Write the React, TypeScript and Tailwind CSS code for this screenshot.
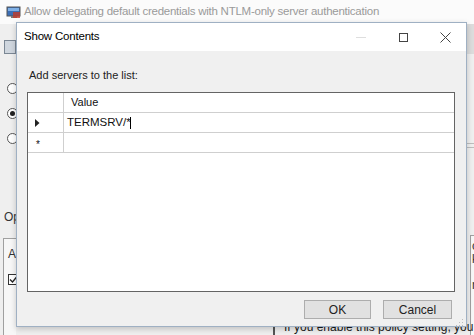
import React from "react";

const font = { fontFamily: '"Liberation Sans", Arial, sans-serif' };

function ParentIcon() {
  return (
    <svg width="16" height="13" viewBox="0 0 16 13">
      <rect x="1" y="1" width="13" height="9" fill="#3b6fb6" stroke="#555" strokeWidth="1" />
      <rect x="2" y="2" width="11" height="3" fill="#7fb0e6" />
      <rect x="5" y="10" width="6" height="2" fill="#777" />
      <rect x="7" y="6" width="7" height="6" fill="#c0392b" opacity="0.8" />
    </svg>
  );
}

export default function App() {
  return (
    <div className="relative w-[474px] h-[335px] overflow-hidden bg-[#efefef] text-[#222]" style={font}>
      {/* Parent window title */}
      <div className="h-[24px] bg-[#fbfbfb] flex items-center pl-[6px] gap-[2px]">
        <ParentIcon />
        <span className="text-[11.5px] text-[#9a9a9a] tracking-[-0.25px] whitespace-nowrap">
          Allow delegating default credentials with NTLM-only server authentication
        </span>
      </div>
      {/* Parent left column */}
      <div className="flex">
        <div className="w-[16px] flex flex-col">
          <div className="h-[14px] mt-[16px] ml-[4px] w-[12px] bg-[#cfd6de] border border-[#7b8794]" />
          <div className="mt-[29px] ml-[7px] w-[11px] h-[11px] rounded-full border border-[#555] bg-white" />
          <div className="mt-[14px] ml-[7px] w-[11px] h-[11px] rounded-full border border-[#555] bg-white flex items-center justify-center">
            <div className="w-[5px] h-[5px] rounded-full bg-[#222]" />
          </div>
          <div className="mt-[14px] ml-[7px] w-[11px] h-[11px] rounded-full border border-[#555] bg-white" />
          <div className="mt-[67px] ml-[4px] h-[12px] text-[12px] text-[#333] leading-none">Op</div>
          <div className="mt-[15px] ml-[3px] h-[120px] border-l border-t border-[#a0a0a0] bg-[#f7f7f7] pl-[4px]">
            <div className="mt-[9px] h-[12px] text-[12px] leading-none text-[#333]">A</div>
            <div className="mt-[14px] w-[11px] h-[11px] border border-[#333] bg-white flex items-center justify-center">
              <svg width="9" height="9" viewBox="0 0 9 9">
                <path d="M1 4.5 L3.5 7 L8 1.5" fill="none" stroke="#222" strokeWidth="1.3" />
              </svg>
            </div>
          </div>
        </div>
      </div>
      {/* Parent right strip */}
      <div className="absolute left-[467px] top-[24px] w-[7px] h-[311px] flex flex-col overflow-hidden">
        <div className="h-[30px] bg-[#dcdcdc]" />
        <div className="mt-[89px] h-[5px] border-t border-b border-[#bdbdbd]" />
        <div className="mt-[87px] ml-[3px] flex-1 border-l border-t border-[#a0a0a0] bg-[#f7f7f7] pl-[1px] text-[12px] leading-[13px] text-[#333]">
          <div className="mt-[4px]">o</div>
          <div>k</div>
          <div className="mt-[13px]">r</div>
        </div>
      </div>
      {/* Parent bottom text (partly under the dialog) */}
      <div className="absolute left-[273px] top-[320px] h-[15px] flex items-start">
        <div className="w-[2px] h-[15px] bg-[#555]" />
        <span className="ml-[9px] text-[12px] leading-[15px] text-[#1a1a1a] whitespace-nowrap">
          If you enable this policy setting, you ca
        </span>
      </div>

      {/* Dialog */}
      <div className="absolute left-[16px] top-[22px] w-[451px] h-[305px] border border-[#9fb0c3] bg-[#f0f0f0] shadow-[0_2px_6px_rgba(0,0,0,0.2)] flex flex-col">
        <div className="h-[28px] bg-white flex items-center pl-[7px]">
          <span className="text-[11.5px] tracking-[-0.2px] text-black flex-1">Show Contents</span>
          <div className="w-[42px] h-[28px] flex items-center justify-center">
            <div className="w-[10px] h-px bg-[#dedede]" />
          </div>
          <div className="w-[42px] h-[28px] flex items-center justify-center">
            <div className="w-[9px] h-[9px] border border-[#444]" />
          </div>
          <div className="w-[42px] h-[28px] flex items-center justify-center">
            <svg width="11" height="11" viewBox="0 0 11 11">
              <path d="M0.5 0.5 L10.5 10.5 M10.5 0.5 L0.5 10.5" stroke="#444" strokeWidth="1" />
            </svg>
          </div>
        </div>
        <div className="flex-1 flex flex-col pl-[10px] pr-[11px]">
          <div className="mt-[17px] h-[14px] pl-[2px] text-[11px] leading-[14px] text-[#222]">Add servers to the list:</div>
          <div className="mt-[10px] h-[200px] border border-[#646464] bg-white flex flex-col text-[11px] text-[#111]">
            <div className="h-[20px] flex border-b border-[#cfcfcf] shrink-0">
              <div className="w-[36px] border-r border-[#cfcfcf]" />
              <div className="pl-[7px] flex items-center">Value</div>
            </div>
            <div className="h-[20px] flex border-b border-[#cfcfcf] shrink-0">
              <div className="w-[36px] border-r border-[#cfcfcf] flex items-center pl-[7px]">
                <svg width="5" height="8" viewBox="0 0 5 8">
                  <path d="M0 0 L4.5 4 L0 8 Z" fill="#222" />
                </svg>
              </div>
              <div className="pl-[3px] flex items-center text-[11.5px]">
                TERMSRV/*<span className="w-[1px] h-[12px] bg-black ml-[-1px]" />
              </div>
            </div>
            <div className="h-[20px] flex border-b border-[#cfcfcf] shrink-0">
              <div className="w-[36px] border-r border-[#cfcfcf] flex items-center pl-[8px] text-[10px] pt-[3px]">*</div>
              <div />
            </div>
          </div>
          <div className="mt-[8px] flex justify-end gap-[12px] pr-[3px]">
            <button className="w-[67px] h-[19px] bg-[#e1e1e1] border border-[#adadad] text-[12px] text-[#222] flex items-center justify-center">OK</button>
            <button className="w-[69px] h-[19px] bg-[#e1e1e1] border border-[#adadad] text-[12px] text-[#222] flex items-center justify-center">Cancel</button>
          </div>
          <div className="flex-1 flex justify-end items-end pb-[1px] -mr-[9px]">
            <svg width="8" height="8" viewBox="0 0 8 8">
              <rect x="6" y="0" width="1" height="1" fill="#bbb" />
              <rect x="3" y="3" width="1" height="1" fill="#bbb" />
              <rect x="6" y="3" width="1" height="1" fill="#bbb" />
              <rect x="0" y="6" width="1" height="1" fill="#bbb" />
              <rect x="3" y="6" width="1" height="1" fill="#bbb" />
              <rect x="6" y="6" width="1" height="1" fill="#bbb" />
            </svg>
          </div>
        </div>
      </div>
    </div>
  );
}
